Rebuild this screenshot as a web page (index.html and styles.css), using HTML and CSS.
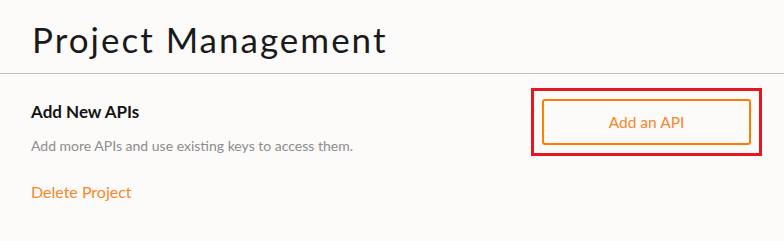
FILE: index.html
```html
<!DOCTYPE html>
<html lang="en">
<head>
    <meta charset="UTF-8">
    <meta name="viewport" content="width=device-width, initial-scale=1.0">
    <title>Project Management</title>
    <link rel="stylesheet" href="styles.css">
</head>
<body>
    <div class="page-header">
        <h1 class="page-title">Project Management</h1>
    </div>

    <div class="section">
        <div class="section-info">
            <h2 class="section-title">Add New APIs</h2>
            <p class="section-desc">Add more APIs and use existing keys to access them.</p>
            <a href="#" class="delete-link">Delete Project</a>
        </div>

        <div class="highlight-box">
            <button class="add-api-btn">Add an API</button>
        </div>
    </div>
</body>
</html>
```

FILE: styles.css
```css
* {
    margin: 0;
    padding: 0;
    box-sizing: border-box;
    font-family: 'Lato', Arial, sans-serif;
}

body {
    background-color: #fcfbfa;
    color: #1a1a1a;
}

.page-header {
    height: 74px;
    padding: 19px 32px 0;
    border-bottom: 1px solid #c4c2c0;
}

.page-title {
    font-size: 35px;
    font-weight: 400;
    line-height: 40px;
    letter-spacing: 2px;
    color: #1a1a1a;
}

.section {
    display: flex;
    justify-content: space-between;
    align-items: flex-start;
    padding: 14px 22px 0 31px;
}

.section-info {
    padding-top: 14px;
}

.section-title {
    font-size: 17px;
    font-weight: 700;
    line-height: 20px;
    color: #141414;
}

.section-desc {
    margin-top: 15px;
    font-size: 14px;
    line-height: 18px;
    color: #8c8c8c;
}

.delete-link {
    display: block;
    width: fit-content;
    margin-top: 27px;
    font-size: 16px;
    line-height: 20px;
    color: #f7862a;
    text-decoration: none;
}

.highlight-box {
    padding: 8px;
    border: 3px solid #e8151f;
}

.add-api-btn {
    display: block;
    width: 209px;
    height: 46px;
    background: none;
    border: 2px solid #ff7c00;
    border-radius: 3px;
    font-size: 15.5px;
    color: #f7862a;
    cursor: pointer;
}
```
